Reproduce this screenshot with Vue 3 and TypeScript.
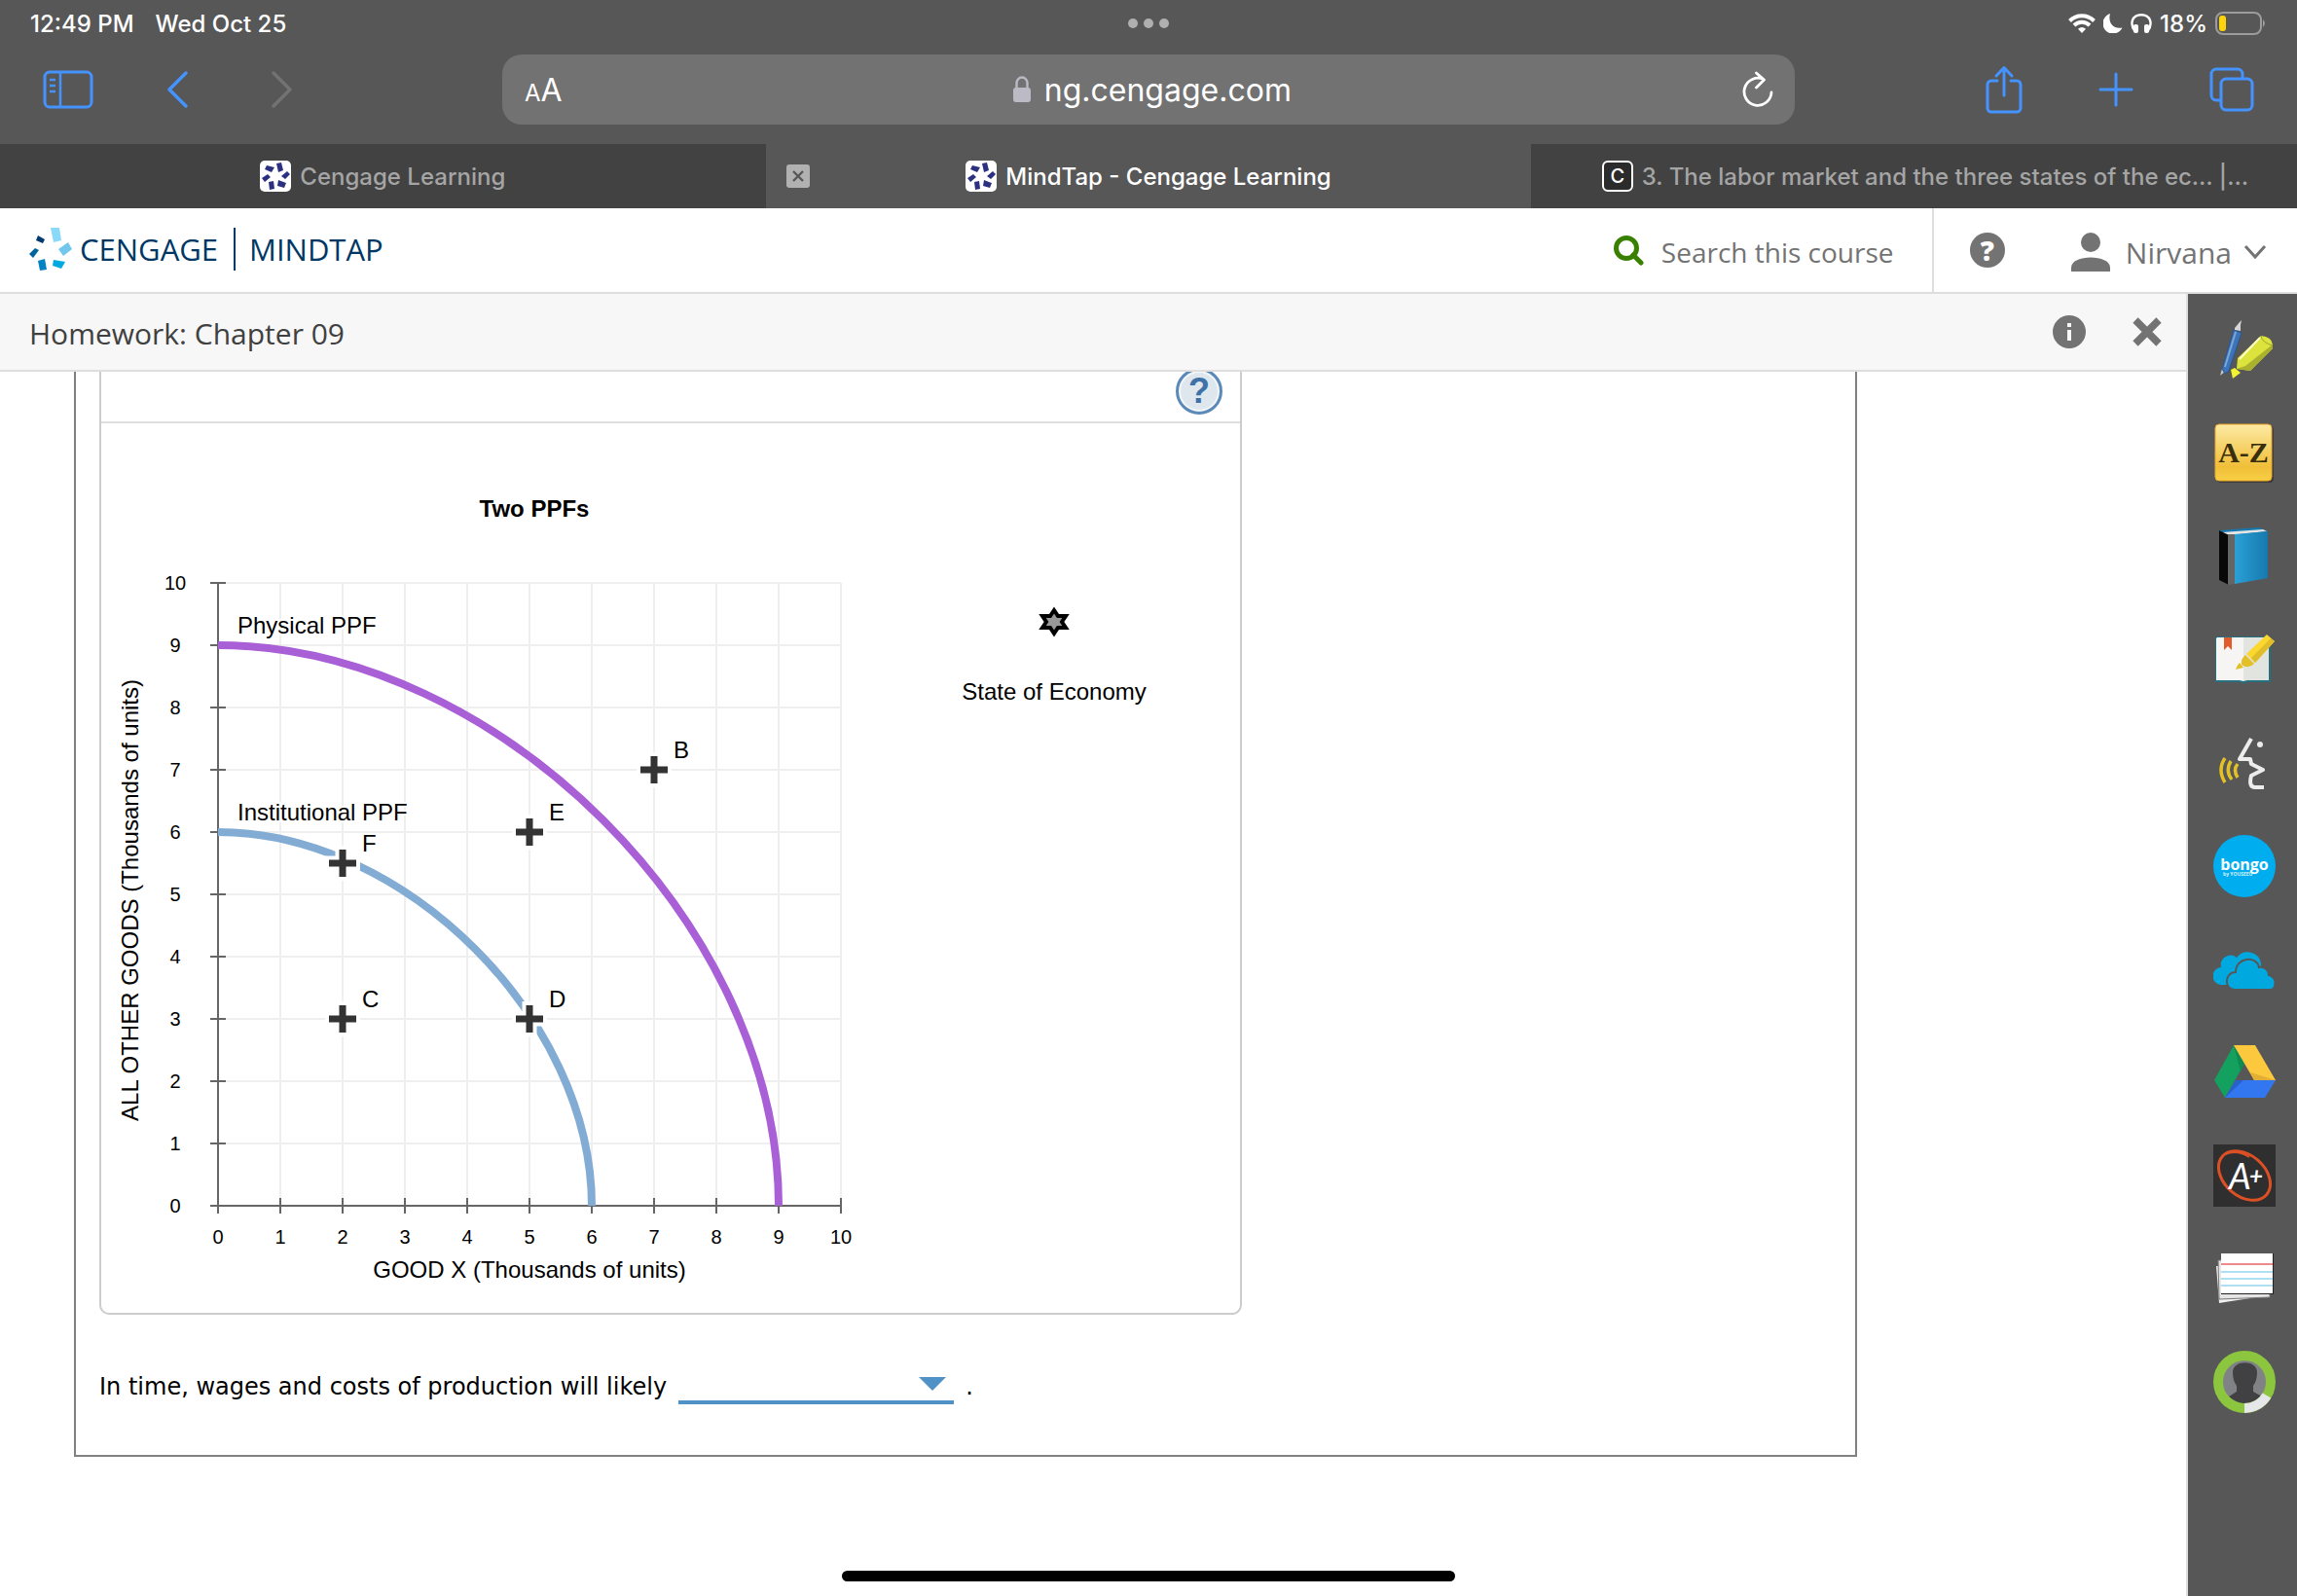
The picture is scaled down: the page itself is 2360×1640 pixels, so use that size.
<script setup lang="ts">
import { ref } from 'vue'

interface Point { name: string; x: number; y: number }

const unit = 64
const originX = 120
const originY = 804
const ticks = Array.from({ length: 11 }, (_, i) => i)
const px = (v: number): number => originX + v * unit
const py = (v: number): number => originY - v * unit

const points: Point[] = [
  { name: 'B', x: 7, y: 7 },
  { name: 'E', x: 5, y: 6 },
  { name: 'F', x: 2, y: 5.5 },
  { name: 'C', x: 2, y: 3 },
  { name: 'D', x: 5, y: 3 },
]

/* Frontier running from (0, r) to (r, 0), flat at the top and steep at the axis */
const frontier = (r: number): string =>
  `M${px(0)} ${py(r)}C${px(r / 2)} ${py(r)} ${px(r)} ${py(r / 2)} ${px(r)} ${py(0)}`

const answer = ref('')
const search = ref('')
</script>

<template>
  <div class="page">
    <header class="chrome">
      <div class="status">
        <div class="status-side">
          <span>12:49 PM</span>
          <span>Wed Oct 25</span>
        </div>
        <div class="dots"><i></i><i></i><i></i></div>
        <div class="status-side status-right">
          <svg width="28" height="20" viewBox="0 0 28 20" fill="none" stroke="#fff" stroke-width="4">
            <path d="M1.5 7.5C8.500 .5 19.500 .5 26.500 7.500" />
            <path d="M6 12C10.500 7.600 17.500 7.600 22 12" />
            <path d="M14 20l-4-4.300q4-3.500 8 0z" fill="#fff" stroke="none" />
          </svg>
          <svg width="20" height="20" viewBox="0 0 20 20" fill="#fff">
            <path d="M7 0A10.500 10.500 0 1 0 19.500 14.500C10 16.500 4.500 9 7 0z" />
          </svg>
          <svg width="22" height="20" viewBox="0 0 22 20" fill="none">
            <path d="M4.500 18C-1 11 1 1.200 11 1.200S23 11 17.500 18" stroke="#fff" stroke-width="2.400" />
            <rect x="3" y="11" width="5" height="9" rx="2" fill="#fff" />
            <rect x="14" y="11" width="5" height="9" rx="2" fill="#fff" />
          </svg>
          <span>18%</span>
          <svg width="53" height="24" viewBox="0 0 53 24">
            <rect x="1" y="1" width="46" height="22" rx="7" fill="none" stroke="#9c9c9c" stroke-width="2" />
            <rect x="4" y="4" width="7" height="16" rx="3" fill="#fcd40b" />
            <path d="M49 8q4 4 0 8z" fill="#9c9c9c" />
          </svg>
        </div>
      </div>

      <div class="toolbar">
        <div class="tools tools-left">
          <button type="button" aria-label="Show sidebar">
            <svg width="52" height="40" viewBox="0 0 52 40" fill="none" stroke="#4593ff" stroke-width="3">
              <rect x="2" y="2" width="48" height="36" rx="5" />
              <path d="M18 2v36M7 10h6M7 16h6M7 22h6" stroke-width="2.500" />
            </svg>
          </button>
          <button type="button" aria-label="Back">
            <svg width="22" height="38" viewBox="0 0 22 38" fill="none" stroke="#4593ff" stroke-width="3.400" stroke-linecap="round" stroke-linejoin="round"><path d="M19 2L2 19l17 17" /></svg>
          </button>
          <button type="button" aria-label="Forward">
            <svg width="22" height="38" viewBox="0 0 22 38" fill="none" stroke="#737373" stroke-width="3.400" stroke-linecap="round" stroke-linejoin="round"><path d="M3 2l17 17L3 36" /></svg>
          </button>
        </div>
        <div class="address">
          <button type="button" class="text-size" aria-label="Page settings"><span class="small-a">A</span><span>A</span></button>
          <button type="button" class="url">
            <svg width="18" height="28" viewBox="0 0 18 28">
              <path d="M3.500 13V7.500a5.500 6 0 0 1 11 0V13" fill="none" stroke="#bcbac4" stroke-width="2.400" />
              <rect x="0" y="12" width="18" height="15" rx="3" fill="#bcbac4" />
            </svg>
            <span>ng.cengage.com</span>
          </button>
          <button type="button" aria-label="Reload">
            <svg width="32" height="38" viewBox="0 0 32 38" fill="none" stroke="#fff" stroke-width="2.800" stroke-linecap="round" stroke-linejoin="round">
              <path d="M30 22A14 14 0 1 1 22 8.600M14.500 2l8 7-8 8" />
            </svg>
          </button>
        </div>
        <div class="tools tools-right">
          <button type="button" aria-label="Share">
            <svg width="38" height="50" viewBox="0 0 38 50" fill="none" stroke="#4593ff" stroke-width="3" stroke-linecap="round" stroke-linejoin="round">
              <path d="M12 16H6a4 4 0 0 0-4 4v24a4 4 0 0 0 4 4h26a4 4 0 0 0 4-4V20a4 4 0 0 0-4-4h-6M19 31V3M11 11l8-8.500 8 8.500" />
            </svg>
          </button>
          <button type="button" aria-label="New tab">
            <svg width="36" height="36" viewBox="0 0 36 36" fill="none" stroke="#4593ff" stroke-width="3" stroke-linecap="round"><path d="M18 2v32M2 18h32" /></svg>
          </button>
          <button type="button" aria-label="Show tabs">
            <svg width="46" height="46" viewBox="0 0 46 46" fill="none" stroke="#4593ff" stroke-width="3">
              <rect x="12" y="12" width="32" height="32" rx="5" />
              <path d="M12 34H7a5 5 0 0 1-5-5V7a5 5 0 0 1 5-5h22a5 5 0 0 1 5 5v5" />
            </svg>
          </button>
        </div>
      </div>

      <nav class="tabs">
        <button type="button" class="tab">
          <svg class="favicon" width="32" height="32" viewBox="0 0 32 32">
            <rect width="32" height="32" rx="5" fill="#fff" />
            <path fill="#2b3180" d="M17 3l5-1 2 8-5 2zM7 5l8 2-3 5-7-3zM8 14l3 3-6 5-3-4zM28 11l3 3-5 5-4-3zM9 22l5-1 1 8-5 1zM19 20l8 3-2 5-7-2z" />
          </svg>
          <span>Cengage Learning</span>
        </button>
        <div class="tab active">
          <button type="button" class="close-tab" aria-label="Close tab">
            <svg width="24" height="24" viewBox="0 0 24 24"><rect width="24" height="24" rx="3" fill="#b1b1b1" /><path d="M7 7l10 10M17 7L7 17" stroke="#575757" stroke-width="2.400" /></svg>
          </button>
          <svg class="favicon" width="32" height="32" viewBox="0 0 32 32">
            <rect width="32" height="32" rx="5" fill="#fff" />
            <path fill="#2b3180" d="M17 3l5-1 2 8-5 2zM7 5l8 2-3 5-7-3zM8 14l3 3-6 5-3-4zM28 11l3 3-5 5-4-3zM9 22l5-1 1 8-5 1zM19 20l8 3-2 5-7-2z" />
          </svg>
          <span>MindTap - Cengage Learning</span>
        </div>
        <button type="button" class="tab last">
          <span class="letter-icon">C</span>
          <span>3. The labor market and the three states of the ec… |…</span>
        </button>
      </nav>
    </header>

    <div class="brandbar">
      <a class="brand" href="#">
        <svg width="44" height="44" viewBox="0 0 44 44">
          <path fill="#8ad9f8" d="M22 0h9l2 13-8 2z" />
          <path fill="#003a70" d="M9 8l7 4-2 4-7-3z" />
          <path fill="#00629f" d="M6 21l4 2-6 8-4-4z" />
          <path fill="#74c7ec" d="M40 15l4 7-9 7-5-7z" />
          <path fill="#0083c3" d="M9 34l7-2 2 11-7 1z" />
          <path fill="#00a9e0" d="M25 33l12 2-4 7-9-3z" />
        </svg>
        <span class="brand-name">CENGAGE</span>
        <span class="brand-product">MINDTAP</span>
      </a>
      <div class="search">
        <svg width="32" height="32" viewBox="0 0 32 32" fill="none" stroke="#398000" stroke-width="5"><circle cx="14" cy="14" r="10.500" /><path d="M21 21l8 8" stroke-linecap="round" /></svg>
        <input v-model="search" type="text" aria-label="Search this course" placeholder="Search this course" />
      </div>
      <div class="account">
        <button type="button" class="round help" aria-label="Help">?</button>
        <button type="button" class="user">
          <svg width="40" height="40" viewBox="0 0 40 40" fill="#737373"><circle cx="20" cy="10" r="10" /><path d="M0 40v-4c0-14 40-14 40 0v4z" /></svg>
          <span>Nirvana</span>
          <svg width="24" height="16" viewBox="0 0 24 16" fill="none" stroke="#737373" stroke-width="3"><path d="M2 2l10 11L22 2" /></svg>
        </button>
      </div>
    </div>

    <div class="body">
      <div class="column">
        <div class="titlebar">
          <h1>Homework: Chapter 09</h1>
          <div class="title-actions">
            <button type="button" class="round info" aria-label="Information">
              <svg width="34" height="34" viewBox="0 0 34 34"><circle cx="17" cy="17" r="17" fill="#737373" /><path d="M15 8h4v4h-4zM15 15h4v11h-4z" fill="#f7f7f7" /></svg>
            </button>
            <button type="button" aria-label="Close">
              <svg width="30" height="30" viewBox="0 0 30 30" stroke="#737373" stroke-width="7.500"><path d="M3 3l24 24M27 3L3 27" /></svg>
            </button>
          </div>
        </div>

        <main>
          <section class="frame">
            <div class="panel">
              <div class="panel-head">
                <button type="button" class="panel-help" aria-label="Graph help">?</button>
              </div>
              <svg class="chart" viewBox="0 0 1170 914" role="img" aria-label="Two PPFs">
                <text class="heading" x="445" y="96" text-anchor="middle">Two PPFs</text>

                <g class="grid">
                  <path v-for="t in ticks" :key="'v' + t" :d="`M${px(t)} ${py(10)}V${py(0)}`" />
                  <path v-for="t in ticks" :key="'h' + t" :d="`M${px(0)} ${py(t)}H${px(10)}`" />
                </g>
                <g class="axis">
                  <path :d="`M${px(0)} ${py(10)}V${py(0)}H${px(10)}`" />
                  <path v-for="t in ticks" :key="'x' + t" :d="`M${px(t)} ${originY - 8}v16`" />
                  <path v-for="t in ticks" :key="'y' + t" :d="`M${originX - 8} ${py(t)}h16`" />
                </g>
                <g class="tick-label" text-anchor="middle">
                  <text v-for="t in ticks" :key="'xl' + t" :x="px(t)" y="843">{{ t }}</text>
                  <text v-for="t in ticks" :key="'yl' + t" x="76" :y="py(t) + 7">{{ t }}</text>
                </g>

                <path class="curve physical" :d="frontier(9)" />
                <path class="curve institutional" :d="frontier(6)" />

                <text class="halo" x="140" y="216">Physical PPF</text>
                <text class="halo" x="140" y="408">Institutional PPF</text>
                <text x="440" y="878" text-anchor="middle">GOOD X (Thousands of units)</text>
                <text transform="translate(38 490) rotate(-90)" text-anchor="middle">ALL OTHER GOODS (Thousands of units)</text>

                <g v-for="p in points" :key="p.name" :transform="`translate(${px(p.x)} ${py(p.y)})`">
                  <path class="cross-halo" d="M-18 0h36M0-18v36" />
                  <path class="cross" d="M-14 0h28M0-14v28" />
                  <text class="halo" x="20" y="-12">{{ p.name }}</text>
                </g>

                <path class="star" transform="translate(979 204)" d="M0-12l4 6h8l-4 6 4 6h-8l-4 6-4-6h-8l4-6-4-6h8z" />
                <text x="979" y="284" text-anchor="middle">State of Economy</text>
              </svg>
            </div>

            <div class="question">
              <label for="wage-answer">In time, wages and costs of production will likely</label>
              <span class="answer">
                <select id="wage-answer" v-model="answer"><option value=""></option></select>
                <svg width="28" height="14" viewBox="0 0 28 14"><path d="M0 0h28L14 14z" fill="#5192c6" /></svg>
              </span>
              <span>.</span>
            </div>
          </section>
        </main>
      </div>

      <aside class="dock">
        <button type="button" aria-label="Highlighter">
          <svg viewBox="0 0 64 64">
            <path d="M7 58l2-7 4 2z" fill="#c9c9c9" />
            <path d="M9 51L21 11l8 3-13 39-4 3z" fill="#3d74b8" stroke="#2a568f" />
            <path d="M12 49L23 13" stroke="#7ba6d8" stroke-width="2" />
            <path d="M22 9l5-6 2-2-1 5 0 6-6-1z" fill="#d5d5d5" />
            <path d="M22 50l-4 2 2 9 8-6z" fill="#f2f233" />
            <path d="M49 17q11 1 12 9v4L38 53l-14-2 1-11z" fill="#dbe33c" />
            <path d="M61 26v4L38 53l-14-2 9-3z" fill="#aab12e" />
            <path d="M48 19L27 41" stroke="#fbfdc5" stroke-width="2" />
            <path d="M49 17q1 7 12 10" fill="none" stroke="#9ea52b" />
          </svg>
        </button>
        <button type="button" aria-label="Glossary">
          <svg viewBox="0 0 64 64">
            <defs><linearGradient id="gold" x2="0" y2="1"><stop stop-color="#fdeaa4" /><stop offset=".75" stop-color="#f0bf39" /><stop offset="1" stop-color="#f7cf45" /></linearGradient></defs>
            <rect x="4" y="4" width="58" height="58" rx="4" fill="#3d3d3d" />
            <rect x="2" y="2" width="58" height="58" rx="4" fill="url(#gold)" stroke="#eda829" />
            <text class="az" x="31" y="41" text-anchor="middle">A-Z</text>
          </svg>
        </button>
        <button type="button" aria-label="Read book">
          <svg viewBox="0 0 64 64">
            <defs><linearGradient id="cover"><stop stop-color="#2ba0d6" /><stop offset="1" stop-color="#1679ae" /></linearGradient></defs>
            <path d="M6 5l41-3 9 4-40 4z" fill="#1679ae" />
            <path d="M9 7l42-3 4 2-38 4z" fill="#e4e4e4" />
            <path d="M6 5l10 5v51L6 56z" fill="#080808" />
            <path d="M15 9l7 0v51l-7 1z" fill="#656565" />
            <path d="M22 9l34-3v48l-34 6z" fill="url(#cover)" />
          </svg>
        </button>
        <button type="button" aria-label="Notes">
          <svg viewBox="0 0 64 64">
            <path d="M4 8h53q2 0 2 2v45H34q-3 3-6 0H2V10q0-2 2-2z" fill="#27707f" />
            <path d="M4 9h27v45l-4-1H3V10z" fill="#f7f5f3" />
            <path d="M31 9h26v44H35l-4 1z" fill="#e2e4df" />
            <path d="M11 9h8v13l-4-4-4 4z" fill="#e25a2b" />
            <path d="M55 6l8 7-20 22-9-9z" fill="#fcd72d" />
            <path d="M59 10l4 3-20 22-4-5z" fill="#dfbd2b" />
            <path d="M33 27l9 9q-6 6-13 1-1-6 4-10zM27 35l4 5-8 2q1-4 4-7z" fill="#e3bf28" />
          </svg>
        </button>
        <button type="button" aria-label="Read speaker">
          <svg viewBox="0 0 64 64" fill="none">
            <path d="M39 7L27 28h11l1 5 12 6-12 6q-3 12 4 12h9" stroke="#ececec" stroke-width="4" stroke-linejoin="round" />
            <circle cx="48" cy="13" r="3" fill="#ececec" />
            <path d="M12 27q-8 12 0 25M18 30q-6 10 1 19M25 33q-5 6 0 14" stroke="#e4c126" stroke-width="3.500" />
          </svg>
        </button>
        <button type="button" aria-label="Bongo">
          <svg viewBox="0 0 64 64">
            <circle cx="32" cy="32" r="32" fill="#00adef" />
            <text class="bongo" x="32" y="36" text-anchor="middle">bongo</text>
            <text class="bongo-by" x="10" y="42">by YOUSEEU</text>
          </svg>
        </button>
        <button type="button" aria-label="Cloud storage">
          <svg viewBox="0 0 64 64" fill="#00a8e0">
            <path d="M9 48a9 9 0 0 1-1-18 10 10 0 0 1 16-10 14 14 0 0 1 25 6v22z" />
            <path d="M22 53c-11 0-11-18 1-18 0-16 22-17 24-5 6-1 10 3 10 8 9 2 8 15 1 15z" stroke="#575757" stroke-width="2" />
          </svg>
        </button>
        <button type="button" aria-label="Drive">
          <svg viewBox="0 0 64 64">
            <path d="M21 4l11 19-20 35L1 40z" fill="#14a05e" />
            <path d="M21 4l11 19-4 8z" fill="#0e8b50" />
            <path d="M21 4h22l21 36H42z" fill="#fcc83e" />
            <path d="M38 32l26 8H42z" fill="#e2ae34" />
            <path d="M23 40h41L53 58H12z" fill="#3377f0" />
            <path d="M23 40h8L12 58z" fill="#2a60cb" />
          </svg>
        </button>
        <button type="button" aria-label="Grades">
          <svg viewBox="0 0 64 64">
            <rect width="64" height="64" fill="#2f2f2f" />
            <g fill="none" stroke="#dc5025">
              <ellipse cx="32" cy="32" rx="30" ry="21" transform="rotate(41 32 32)" stroke-width="3" />
              <path d="M12 10Q25 5 37 13" stroke-width="2" />
            </g>
            <text class="grade" x="16" y="46">A<tspan class="plus" x="37" y="41">+</tspan></text>
          </svg>
        </button>
        <button type="button" aria-label="Flashcards">
          <svg viewBox="0 0 64 64">
            <path d="M3 19l4 0v32l44-1-45 7z" fill="#efefef" />
            <path d="M5 13h4v34h49v4L6 53z" fill="#e5e5e5" stroke="#777" stroke-width="1" />
            <path d="M8 6h54v42H8z" fill="#222" />
            <path d="M8 6h53v41H8z" fill="#fff" />
            <path d="M8 17h53" stroke="#f08a8a" stroke-width="2" />
            <path d="M8 25h53M8 32h53M8 39h53" stroke="#aedff2" stroke-width="2" />
          </svg>
        </button>
        <button type="button" aria-label="Profile progress">
          <svg viewBox="0 0 64 64">
            <circle cx="32" cy="32" r="23" fill="#808285" />
            <path d="M20 22c0-13 25-13 25 0q0 9-4 14v6l9 5q-17 15-34 0l8-5v-6q-4-5-4-14z" fill="#414042" />
            <circle cx="32" cy="32" r="27" fill="none" stroke="#8cc63f" stroke-width="10" />
            <path d="M32 59A27 27 0 0 0 55 46" fill="none" stroke="#e6e7e8" stroke-width="10" />
          </svg>
        </button>
      </aside>
    </div>
    <div class="home-indicator"></div>
  </div>
</template>

<style>
body {
  margin: 0;
  background: #fff;
}
</style>

<style scoped>
* {
  box-sizing: border-box;
}
.page {
  position: relative;
  display: flex;
  flex-direction: column;
  min-height: 100vh;
  background: #fff;
  font-family: "Open Sans", sans-serif;
  color: #404040;
}
button {
  display: flex;
  align-items: center;
  padding: 0;
  border: 0;
  background: none;
  font: inherit;
  color: inherit;
}
svg {
  display: block;
  flex: none;
}

.chrome {
  background: #575757;
  color: #fff;
  font-family: Inter, sans-serif;
}
.status {
  display: flex;
  align-items: center;
  justify-content: space-between;
  height: 48px;
  padding: 0 31px;
  font-size: 24px;
  font-weight: 500;
}
.status-side {
  display: flex;
  flex: 1;
  align-items: center;
  gap: 22px;
}
.status-right {
  justify-content: flex-end;
  gap: 8px;
}
.dots {
  display: flex;
  gap: 6px;
}
.dots i {
  width: 10px;
  height: 10px;
  border-radius: 50%;
  background: #b0b0b0;
}
.toolbar {
  display: flex;
  align-items: center;
  height: 100px;
  padding: 0 44px 12px;
}
.tools {
  display: flex;
  flex: 1;
  align-items: center;
}
.tools-left {
  gap: 76px;
}
.tools-left button:last-child {
  margin-left: 8px;
}
.tools-right {
  justify-content: flex-end;
  gap: 78px;
}
.address {
  display: flex;
  align-items: center;
  justify-content: space-between;
  width: 1328px;
  height: 72px;
  padding: 0 22px 0 23px;
  border-radius: 20px;
  background: #727272;
  font-size: 32px;
}
.text-size {
  align-items: baseline;
}
.small-a {
  font-size: 24px;
}
.url {
  gap: 14px;
}
.tabs {
  display: grid;
  grid-template-columns: repeat(3, minmax(0, 1fr));
}
.tab {
  position: relative;
  display: flex;
  align-items: center;
  justify-content: center;
  gap: 9px;
  min-width: 0;
  height: 66px;
  background: #424242;
  color: #a5a5a5;
  font-size: 24px;
  font-weight: 500;
  white-space: nowrap;
}
.active {
  background: #575757;
  color: #fff;
}
.close-tab {
  position: absolute;
  left: 21px;
}
.last {
  justify-content: flex-end;
  padding-right: 50px;
}
.letter-icon {
  display: flex;
  align-items: center;
  justify-content: center;
  width: 32px;
  height: 32px;
  border: 2px solid #fff;
  border-radius: 6px;
  background: #2b2b2b;
  color: #fff;
  font-size: 20px;
}

.brandbar {
  display: flex;
  align-items: stretch;
  height: 88px;
  border-bottom: 2px solid #dedede;
}
.brand {
  display: flex;
  flex: 1;
  align-items: center;
  padding: 0 0 2px 30px;
  color: #003865;
  font-size: 31px;
  text-decoration: none;
}
.brand-name {
  padding: 0 16px 0 8px;
  border-right: 2px solid #003865;
  line-height: 44px;
}
.brand-product {
  padding-left: 14px;
}
.search {
  display: flex;
  align-items: center;
  gap: 18px;
  padding-right: 22px;
  border-right: 2px solid #dedede;
}
.search input {
  width: 256px;
  padding: 4px 0 0;
  border: 0;
  outline: 0;
  background: none;
  color: #737373;
  font: 28px "Open Sans", sans-serif;
}
.search input::placeholder {
  color: #737373;
  opacity: 1;
}
.account {
  display: flex;
  align-items: center;
  gap: 68px;
  padding: 0 31px 0 37px;
  color: #737373;
}
.help {
  justify-content: center;
  width: 36px;
  height: 36px;
  border-radius: 50%;
  background: #737373;
  color: #fff;
  font-size: 28px;
  font-weight: 800;
}
.user {
  gap: 16px;
  padding-top: 4px;
  font-size: 30px;
}
.user span {
  margin-right: -4px;
}

.body {
  display: flex;
  flex: 1;
}
.column {
  flex: 1;
  min-width: 0;
}
.titlebar {
  display: flex;
  align-items: center;
  justify-content: space-between;
  height: 80px;
  padding: 0 25px 0 30px;
  border-bottom: 2px solid #dedede;
  background: #f7f7f7;
}
h1 {
  margin: 0;
  padding-top: 2px;
  font-size: 30px;
  font-weight: 400;
}
.title-actions {
  display: flex;
  align-items: center;
  gap: 48px;
}
.frame {
  margin: 0 338px 0 76px;
  padding: 0 24px 48px;
  border: 2px solid #808080;
  border-top: 0;
}
.panel {
  max-width: 1174px;
  border: 2px solid #ccc;
  border-top: 0;
  border-radius: 0 0 10px 10px;
}
.panel-head {
  display: flex;
  align-items: center;
  justify-content: flex-end;
  height: 53px;
  padding: 0 18px 12px 0;
  border-bottom: 2px solid #dedede;
  overflow: hidden;
}
.panel-help {
  flex: none;
  justify-content: center;
  width: 48px;
  height: 48px;
  border: 3px solid #5c8ab8;
  border-radius: 50%;
  background: #dfe7ee;
  box-shadow: inset 0 0 0 2px #f4f7fa;
  color: #3d71a8;
  font-family: "Liberation Sans", sans-serif;
  font-size: 36px;
  font-weight: 700;
}
.chart {
  width: 100%;
  height: auto;
  font-family: "Liberation Sans", sans-serif;
  font-size: 24px;
  fill: #000;
}
.chart path {
  fill: none;
}
.heading {
  font-weight: 700;
}
.grid {
  stroke: #efefef;
  stroke-width: 2;
}
.axis {
  stroke: #666;
  stroke-width: 2;
}
.tick-label {
  font-size: 20px;
}
.curve {
  stroke-width: 8;
}
.physical {
  stroke: #a95fd6;
}
.institutional {
  stroke: #82acd3;
}
.halo {
  stroke: #fff;
  stroke-width: 4;
  paint-order: stroke;
}
.cross-halo {
  stroke: #fff;
  stroke-width: 15;
}
.cross {
  stroke: #333;
  stroke-width: 7;
}
.chart .star {
  fill: #999;
  stroke: #000;
  stroke-width: 4;
}
.question {
  display: flex;
  align-items: center;
  gap: 12px;
  margin-top: 52px;
  color: #000;
  font-family: Verdana, "DejaVu Sans", sans-serif;
  font-size: 24px;
  line-height: 44px;
}
.answer {
  position: relative;
  display: block;
  width: 283px;
}
.answer select {
  display: block;
  width: 100%;
  height: 36px;
  border: 0;
  border-bottom: 4px solid #5192c6;
  border-radius: 0;
  outline: 0;
  background: none;
  appearance: none;
  font: inherit;
}
.answer svg {
  position: absolute;
  top: 8px;
  right: 8px;
  pointer-events: none;
}

.dock {
  display: flex;
  flex-direction: column;
  align-items: center;
  gap: 42px;
  width: 114px;
  padding: 26px 0 26px 4px;
  border-left: 2px solid #dedede;
  background: #575757;
}
.dock svg {
  width: 64px;
  height: 64px;
}
.az {
  fill: #3a2f0c;
  font: 700 30px "Liberation Serif", serif;
}
.bongo {
  fill: #fff;
  font: 700 16px "Open Sans", sans-serif;
}
.bongo-by {
  fill: #d5f1fc;
  font: 700 5px "Open Sans", sans-serif;
}
.grade {
  fill: #fff;
  font: italic 400 36px Lato, sans-serif;
}
.plus {
  font-size: 24px;
  font-weight: 700;
}
.home-indicator {
  position: absolute;
  bottom: 15px;
  left: 50%;
  width: 630px;
  height: 11px;
  border-radius: 6px;
  background: #000;
  transform: translateX(-50%);
}
</style>
